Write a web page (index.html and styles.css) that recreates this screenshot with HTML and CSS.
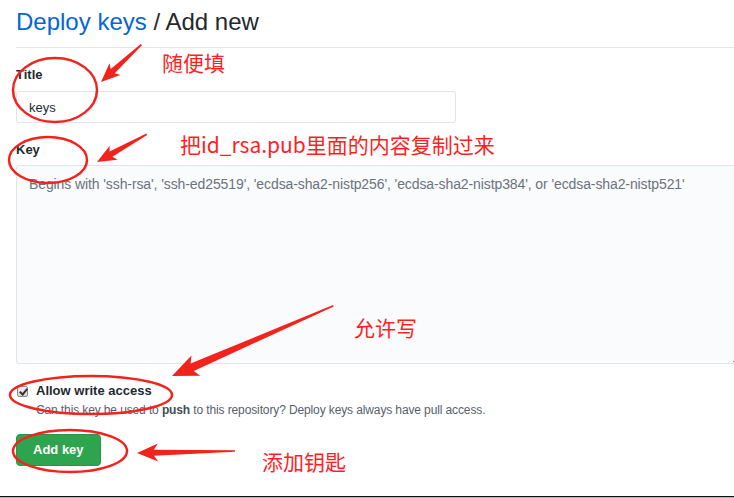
FILE: index.html
```html
<!DOCTYPE html>
<html lang="en">
<head>
<meta charset="utf-8">
<title>Deploy keys / Add new</title>
<link rel="stylesheet" href="styles.css">
</head>
<body>
<div class="page">
  <h1 class="heading"><a class="crumb" href="#">Deploy keys</a> / Add new</h1>
  <form class="form">
    <div class="field field-title">
      <label class="label" for="title">Title</label>
      <input id="title" class="input" type="text" value="keys">
    </div>
    <div class="field field-key">
      <label class="label" for="key">Key</label>
      <textarea id="key" class="textarea" placeholder="Begins with 'ssh-rsa', 'ssh-ed25519', 'ecdsa-sha2-nistp256', 'ecdsa-sha2-nistp384', or 'ecdsa-sha2-nistp521'"></textarea>
    </div>
    <div class="check-block">
      <label class="check-label"><input class="checkbox" type="checkbox" checked>Allow write access</label>
      <p class="hint">Can this key be used to <strong>push</strong> to this repository? Deploy keys always have pull access.</p>
    </div>
    <div class="actions">
      <button class="btn" type="button">Add key</button>
    </div>
  </form>
  <div class="taskbar"></div>

  <svg class="annot" width="734" height="498" viewBox="0 0 734 498">
    <g fill="none" stroke="#f2231d" stroke-width="2.5">
      <ellipse cx="55" cy="90" rx="42" ry="32"/>
      <ellipse cx="48" cy="160" rx="39" ry="23"/>
      <ellipse cx="91" cy="395" rx="81" ry="19"/>
      <ellipse cx="70" cy="451" rx="57" ry="21"/>
    </g>
    <g fill="#f2231d">
      <polygon transform="translate(101 82) rotate(-42.8)" points="0,0 19,-8 16,-3 55,-0.8 55,0.8 16,3 19,8"/>
      <polygon transform="translate(97 162) rotate(-29.2)" points="0,0 19,-8 16,-3 57,-0.8 57,0.8 16,3 19,8"/>
      <polygon transform="translate(172 376) rotate(-23.5)" points="0,0 26,-11 22,-4 176,-0.8 176,0.8 22,4 26,11"/>
      <polygon transform="translate(137 453) rotate(-1.2)" points="0,0 21,-9 17,-3 98,-0.8 98,0.8 17,3 21,9"/>
    </g>
  </svg>
  <span class="mark mark-1">随便填</span>
  <span class="mark mark-2">把id_rsa.pub里面的内容复制过来</span>
  <span class="mark mark-3">允许写</span>
  <span class="mark mark-4">添加钥匙</span>
</div>
</body>
</html>
```
FILE: styles.css
```css
* { box-sizing: border-box; }
html, body { margin: 0; padding: 0; background: #fff; }
body {
  font-family: "Liberation Sans", Arial, sans-serif;
  color: #24292e;
  overflow: hidden;
}
.page {
  position: relative;
  width: 734px;
  height: 498px;
  display: flex;
  flex-direction: column;
  overflow: hidden;
}
.heading {
  margin: 0 0 0 16px;
  padding: 6px 0 9px;
  font-size: 24px;
  line-height: 32px;
  font-weight: normal;
  color: #24292e;
  border-bottom: 1px solid #e1e4e8;
}
.crumb { color: #0366d6; text-decoration: none; }
.form { padding-left: 16px; }
.field { display: flex; flex-direction: column; }
.field-title { margin-top: 18px; }
.field-key { margin-top: 18px; }
.label {
  font-size: 13px;
  line-height: 18px;
  font-weight: bold;
  margin-bottom: 7px;
  color: #24292e;
}
.field-key .label { margin-bottom: 6px; }
.input {
  width: 440px;
  height: 32px;
  padding: 6px 12px;
  font: 13px/20px "Liberation Sans", Arial, sans-serif;
  color: #24292e;
  background: #fff;
  border: 1px solid #e1e4e8;
  border-radius: 3px;
  outline: none;
}
.textarea {
  width: 726px;
  height: 199px;
  padding: 8px 12px;
  font: 14px/20px "Liberation Sans", Arial, sans-serif;
  letter-spacing: -0.1px;
  color: #24292e;
  background: #fafbfc;
  border: 1px solid #e1e4e8;
  border-radius: 3px;
  outline: none;
  resize: vertical;
}
.textarea::placeholder { color: #6a737d; }
.check-block { margin-top: 18px; }
.check-label {
  display: flex;
  align-items: center;
  font-size: 13px;
  line-height: 18px;
  font-weight: bold;
  color: #24292e;
}
.checkbox {
  appearance: none;
  -webkit-appearance: none;
  margin: 0 8px 0 1px;
  width: 11px;
  height: 11px;
  border: 1px solid #8a8a8a;
  border-radius: 2px;
  background: linear-gradient(#f0f0f0, #d8d8d8);
  position: relative;
}
.checkbox:checked::after {
  content: "";
  position: absolute;
  left: 2.5px;
  top: 0px;
  width: 3px;
  height: 6px;
  border: solid #333;
  border-width: 0 2px 2px 0;
  transform: rotate(40deg);
}
.hint {
  margin: 2px 0 0 20px;
  font-size: 12px;
  line-height: 16px;
  letter-spacing: -0.12px;
  color: #586069;
}
.hint strong { color: #444d56; }
.actions { margin-top: 16px; }
.btn {
  height: 32px;
  padding: 0 16px;
  font: bold 13px/30px "Liberation Sans", Arial, sans-serif;
  color: #fff;
  background: #2ea44f;
  border: 1px solid #2a9447;
  border-radius: 4px;
}
.taskbar {
  margin-top: auto;
  height: 2px;
  border-top: 1px solid #111;
  background: #a9bdb8;
}
.annot {
  position: absolute;
  left: 0;
  top: 0;
  pointer-events: none;
}
.mark {
  position: absolute;
  font-family: "Noto Sans CJK SC", sans-serif;
  font-size: 21px;
  line-height: 24px;
  color: #ff1f1f;
  white-space: nowrap;
}
.mark-1 { left: 162px; top: 50px; }
.mark-2 { left: 180px; top: 132px; }
.mark-3 { left: 354px; top: 315px; }
.mark-4 { left: 262px; top: 449px; }
```
